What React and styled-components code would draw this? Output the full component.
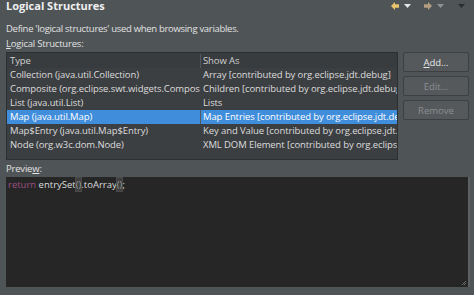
import React from 'react'
import styled, { createGlobalStyle } from 'styled-components'

const Global = createGlobalStyle`
  html, body { margin: 0; padding: 0; background: #4f5457; }
  body { font-family: "Open Sans", "Noto Sans", sans-serif; font-size: 9.5px; color: #e2e2e2; }
`

const Page = styled.div`
  width: 474px;
  height: 295px;
  box-sizing: border-box;
  padding: 0 5px 0 6px;
  display: flex;
  flex-direction: column;
  overflow: hidden;
`

const Header = styled.div`
  height: 12px;
  display: flex;
  align-items: center;
  justify-content: space-between;
  margin-top: 0;
`

const Title = styled.h1`
  margin: 0;
  font-size: 11px;
  line-height: 12px;
  font-weight: 700;
  color: #f0f0f0;
`

const Nav = styled.div`
  display: flex;
  align-items: center;
  gap: 4px;
  margin-right: 4px;
`

const Intro = styled.p`
  margin: 11px 0 0;
  line-height: 12px;
  letter-spacing: -0.3px;
`

const Label = styled.div`
  margin-top: 3px;
  line-height: 12px;
  letter-spacing: -0.2px;
  u { text-decoration-thickness: 1px; text-underline-offset: 1px; }
`

const Body = styled.div`
  display: flex;
  gap: 5px;
  margin-top: 2px;
`

const Table = styled.div`
  width: 392px;
  height: 108px;
  box-sizing: border-box;
  background: #3c3f42;
  border: 1px solid #2d3032;
  overflow: hidden;
`

const Row = styled.div`
  display: grid;
  grid-template-columns: 193px 1fr;
  height: ${p => (p.$head ? 15 : 14)}px;
  align-items: center;
  white-space: nowrap;
  letter-spacing: -0.1px;
  background: ${p => (p.$selected ? '#3f8ddb' : p.$head ? '#393c3f' : 'transparent')};
  color: ${p => (p.$selected ? '#ffffff' : '#dcdcdc')};
`

const Cell = styled.div`
  overflow: hidden;
  padding-left: ${p => (p.$first ? 3 : 2)}px;
  border-left: ${p => (p.$first ? 'none' : p.$divider ? '1px solid #55595c' : '1px solid transparent')};
  line-height: 14px;
  color: ${p => (p.$head ? '#cfcfcf' : 'inherit')};
`

const Buttons = styled.div`
  display: flex;
  flex-direction: column;
  gap: 4px;
`

const Button = styled.button`
  width: 66px;
  height: 20px;
  box-sizing: border-box;
  background: #55595c;
  border: 1px solid #3d4042;
  border-radius: 2px;
  font: inherit;
  color: ${p => (p.disabled ? '#8b8f92' : '#e8e8e8')};
  padding: 0;
  u { text-decoration-thickness: 1px; }
`

const PreviewLabel = styled(Label)`
  margin-top: 3px;
`

const Preview = styled.div`
  margin-top: 2px;
  height: 110px;
  width: 464px;
  flex-shrink: 0;
  box-sizing: border-box;
  background: #262626;
  border-right: 2px solid #5d6164;
  padding: 1px 2px;
  position: relative;
  line-height: 14px;
  color: #dcdcdc;
`

const Keyword = styled.span`
  color: #9c4f84;
`

const Bracket = styled.span`
  background: #3f3f3f;
  color: #9a9a9a;
  outline: 1px solid #4a4a4a;
`

const Grip = styled.svg`
  position: absolute;
  right: 1px;
  bottom: 1px;
`

const rows = [
  ['Collection (java.util.Collection)', 'Array [contributed by org.eclipse.jdt.debug]'],
  ['Composite (org.eclipse.swt.widgets.Composite)', 'Children [contributed by org.eclipse.jdt.debug.ui]'],
  ['List (java.util.List)', 'Lists'],
  ['Map (java.util.Map)', 'Map Entries [contributed by org.eclipse.jdt.debug]'],
  ['Map$Entry (java.util.Map$Entry)', 'Key and Value [contributed by org.eclipse.jdt.debug]'],
  ['Node (org.w3c.dom.Node)', 'XML DOM Element [contributed by org.eclipse.jdt.debug]'],
]

function Arrow({ dir, color }) {
  const d = dir === 'left' ? 'M1 5 L5 1 L5 3.3 L9 3.3 L9 6.7 L5 6.7 L5 9 Z' : 'M9 5 L5 1 L5 3.3 L1 3.3 L1 6.7 L5 6.7 L5 9 Z'
  return (
    <svg width="10" height="10" viewBox="0 0 10 10">
      <path d={d} fill={color} />
    </svg>
  )
}

function Down({ color }) {
  return (
    <svg width="7" height="4" viewBox="0 0 7 4">
      <path d="M0 0 L7 0 L3.5 4 Z" fill={color} />
    </svg>
  )
}

export default function App() {
  return (
    <>
      <Global />
      <Page>
        <Header>
          <Title>Logical Structures</Title>
          <Nav>
            <Arrow dir="left" color="#e8c56a" />
            <Down color="#e6e6e6" />
            <span style={{ width: 4 }} />
            <Arrow dir="right" color="#b49d80" />
            <Down color="#8f9396" />
            <span style={{ width: 6 }} />
            <Down color="#2a2c2e" />
          </Nav>
        </Header>
        <Intro>Define 'logical structures' used when browsing variables.</Intro>
        <Label><u>L</u>ogical Structures:</Label>
        <Body>
          <Table>
            <Row $head>
              <Cell $first $head>Type</Cell>
              <Cell $head $divider>Show As</Cell>
            </Row>
            {rows.map(([type, show], i) => (
              <Row key={type} $selected={i === 3}>
                <Cell $first>{type}</Cell>
                <Cell $divider={i === 3}>{show}</Cell>
              </Row>
            ))}
          </Table>
          <Buttons>
            <Button><u>A</u>dd...</Button>
            <Button disabled>Edit...</Button>
            <Button disabled>Remove</Button>
          </Buttons>
        </Body>
        <PreviewLabel>Previe<u>w</u>:</PreviewLabel>
        <Preview>
          <Keyword>return</Keyword> entrySet<Bracket>()</Bracket>.toArray<Bracket>()</Bracket>;
          <Grip width="6" height="6" viewBox="0 0 6 6">
            <path d="M5 1 L1 5 M5 3 L3 5" stroke="#6a6e70" strokeWidth="1" />
          </Grip>
        </Preview>
      </Page>
    </>
  )
}
